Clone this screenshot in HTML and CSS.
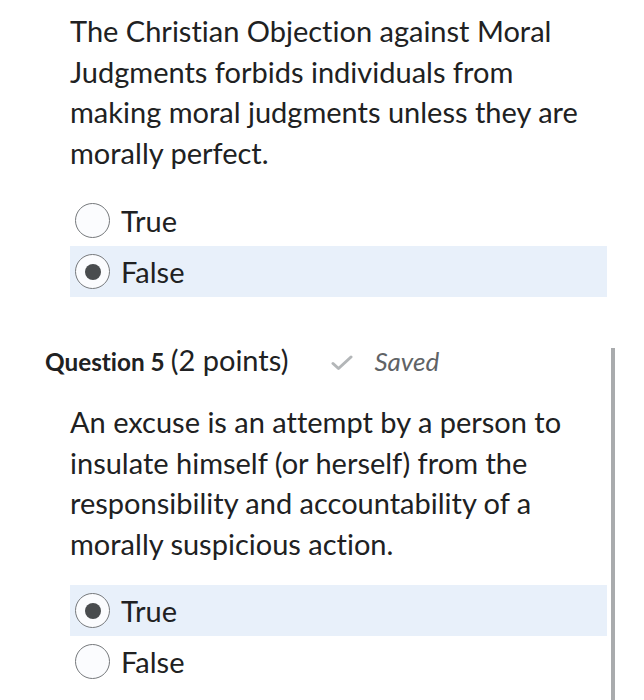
FILE: index.html
```html
<!DOCTYPE html>
<html>
<head>
<meta charset="utf-8">
<link rel="stylesheet" href="styles.css">
</head>
<body>
<section class="question q-prev">
  <p class="prompt">The Christian Objection against Moral Judgments forbids individuals from making moral judgments unless they are morally perfect.</p>
  <div class="options">
    <label class="option"><span class="radio"></span><span class="opt-text">True</span></label>
    <label class="option selected"><span class="radio checked"></span><span class="opt-text">False</span></label>
  </div>
</section>
<section class="q5">
  <div class="q5-main">
    <header class="q-head">
      <span class="q-title">Question 5</span>
      <span class="q-points">(2 points)</span>
      <span class="saved">
        <svg class="check" width="22" height="16" viewBox="0 0 22 16"><path d="M2 8.5 L7.5 13.5 L20 2" fill="none" stroke="#b3b6b8" stroke-width="3" stroke-linecap="round" stroke-linejoin="round"/></svg>
        <span class="saved-text">Saved</span>
      </span>
    </header>
    <div class="question">
      <p class="prompt">An excuse is an attempt by a person to insulate himself (or herself) from the responsibility and accountability of a morally suspicious action.</p>
      <div class="options">
        <label class="option selected"><span class="radio checked"></span><span class="opt-text">True</span></label>
        <label class="option"><span class="radio"></span><span class="opt-text">False</span></label>
      </div>
    </div>
  </div>
  <div class="rail"></div>
</section>
</body>
</html>
```
FILE: styles.css
```css
html, body {
  margin: 0;
  padding: 0;
  background: #ffffff;
}
body {
  font-family: Lato, "Noto Sans", sans-serif;
  font-variant-ligatures: none;
  color: #202122;
  width: 644px;
  height: 700px;
  overflow: hidden;
}
.question {
  margin-left: 70px;
  width: 537px;
}
.q-prev {
  padding-top: 11px;
}
.prompt {
  margin: 0;
  font-size: 29px;
  line-height: 40.5px;
}
.options {
  margin-top: 22px;
  display: flex;
  flex-direction: column;
}
.option {
  display: flex;
  align-items: center;
  height: 51px;
  gap: 11px;
  padding-left: 5px;
}
.option.selected {
  background: #e8f0fa;
}
.radio {
  box-sizing: border-box;
  width: 35px;
  height: 35px;
  border-radius: 50%;
  border: 1.5px solid #76797c;
  background: #fbfcfe;
  display: flex;
  align-items: center;
  justify-content: center;
  flex: none;
}
.radio.checked::after {
  content: "";
  width: 16px;
  height: 16px;
  border-radius: 50%;
  background: #494c4e;
}
.opt-text {
  font-size: 29px;
}
.q5 {
  margin-top: 51px;
  display: flex;
  align-items: stretch;
  height: 360px;
}
.q5-main {
  width: 611px;
}
.rail {
  width: 4px;
  background: #a9abad;
}
.q-head {
  padding-left: 45px;
  margin-top: -2px;
  display: flex;
  align-items: baseline;
  height: 28px;
  line-height: 28px;
}
.q-title {
  font-weight: 700;
  font-size: 24.3px;
}
.q-points {
  font-size: 29px;
  margin-left: 6px;
}
.saved {
  margin-left: 43px;
  display: flex;
  align-items: baseline;
  gap: 21px;
}
.check {
  align-self: center;
  position: relative;
  top: 2px;
}
.saved-text {
  font-style: italic;
  font-size: 26px;
  color: #5f6366;
}
.q5 .question {
  margin-top: 28px;
}
.q5 .options {
  margin-top: 21px;
}
```
